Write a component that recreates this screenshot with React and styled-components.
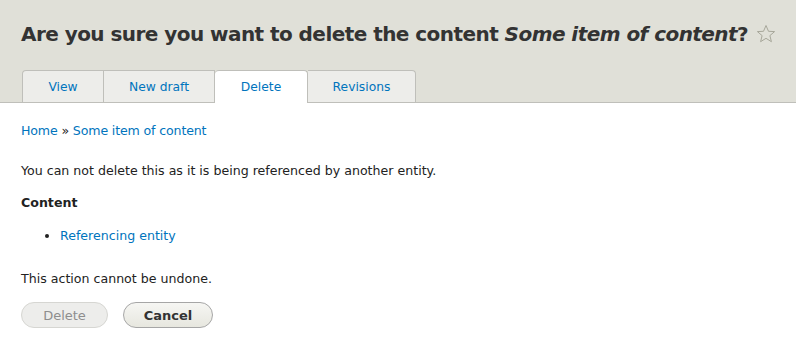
import styled, { createGlobalStyle } from "styled-components";

const GlobalStyle = createGlobalStyle`
  html, body {
    margin: 0;
    padding: 0;
    background: #fff;
  }
  body {
    font-family: "DejaVu Sans", "Lucida Grande", Verdana, sans-serif;
    font-size: 12.6px;
    color: #222;
  }
`;

const Header = styled.header`
  background: #e0e0d8;
  padding: 20px 21px 0;
  border-bottom: 1px solid #bfbfba;
`;

const Title = styled.h1`
  margin: 0;
  display: flex;
  align-items: center;
  white-space: nowrap;
  font-size: 20px;
  letter-spacing: -0.55px;
  line-height: 28px;
  font-weight: bold;
  color: #333;
  em {
    font-style: italic;
  }
`;

const Star = styled.svg`
  margin-left: 8px;
  width: 20px;
  height: 20px;
  flex: none;
`;

const Tabs = styled.ul`
  list-style: none;
  margin: 22px 0 0 1px;
  padding: 0;
  display: flex;
`;

const Tab = styled.li`
  box-sizing: border-box;
  width: ${(p) => p.$w}px;
  height: ${(p) => (p.$active ? 33 : 32)}px;
  display: flex;
  align-items: center;
  justify-content: center;
  background: ${(p) => (p.$active ? "#fff" : "#ededea")};
  border: 1px solid #bfbfba;
  border-bottom: none;
  border-left-width: ${(p) => (p.$first ? 1 : 0)}px;
  border-radius: ${(p) =>
    p.$first ? "4px 0 0 0" : p.$last ? "0 4px 0 0" : p.$active ? "4px 4px 0 0" : "0"};
  margin-bottom: ${(p) => (p.$active ? "-1px" : "0")};
  padding-bottom: ${(p) => (p.$active ? 1 : 0)}px;
  a {
    color: #0074bd;
    text-decoration: none;
    font-size: 12.3px;
  }
`;

const Main = styled.main`
  padding: 19px 21px 0;
`;

const Breadcrumb = styled.nav`
  line-height: 18px;
  letter-spacing: -0.15px;
  a {
    color: #0074bd;
    text-decoration: none;
  }
`;

const Text = styled.p`
  margin: ${(p) => p.$mt}px 0 0;
  line-height: 18px;
  font-weight: ${(p) => (p.$bold ? "bold" : "normal")};
`;

const List = styled.ul`
  margin: 15px 0 0;
  padding-left: 39px;
  line-height: 18px;
  a {
    color: #0074bd;
    text-decoration: none;
  }
`;

const Actions = styled.div`
  margin-top: 14px;
  display: flex;
  gap: 15px;
`;

const Button = styled.button`
  height: 26px;
  box-sizing: border-box;
  width: ${(p) => p.$w}px;
  border-radius: 13px;
  font-family: inherit;
  font-size: 13px;
  padding: 0;
  border: 1px solid ${(p) => (p.disabled ? "#d6d6d2" : "#a6a6a6")};
  background: ${(p) =>
    p.disabled ? "#ededeb" : "linear-gradient(#f6f6f3, #e7e7df)"};
  color: ${(p) => (p.disabled ? "#8e8e8e" : "#333")};
  font-weight: ${(p) => (p.disabled ? "normal" : "bold")};
`;

const tabs = [
  { label: "View", w: 82 },
  { label: "New draft", w: 111 },
  { label: "Delete", w: 93, active: true },
  { label: "Revisions", w: 108 },
];

export default function App() {
  return (
    <>
      <GlobalStyle />
      <Header>
        <Title>
          <span>
            Are you sure you want to delete the content <em>Some item of content</em>?
          </span>
          <Star viewBox="0 0 20 20">
            <polygon
              points="10,1.5 12.5,7.3 18.6,7.6 13.9,11.6 15.4,17.7 10,14.3 4.6,17.7 6.1,11.6 1.4,7.6 7.5,7.3"
              fill="none"
              stroke="#a7a79a"
              strokeWidth="1"
              strokeLinejoin="round"
            />
          </Star>
        </Title>
        <Tabs>
          {tabs.map((t, i) => (
            <Tab
              key={t.label}
              $w={t.w}
              $active={t.active}
              $first={i === 0}
              $last={i === tabs.length - 1}
            >
              <a href="#">{t.label}</a>
            </Tab>
          ))}
        </Tabs>
      </Header>
      <Main>
        <Breadcrumb>
          <a href="#">Home</a> » <a href="#">Some item of content</a>
        </Breadcrumb>
        <Text $mt={22}>
          You can not delete this as it is being referenced by another entity.
        </Text>
        <Text $mt={14} $bold>
          Content
        </Text>
        <List>
          <li>
            <a href="#">Referencing entity</a>
          </li>
        </List>
        <Text $mt={25}>This action cannot be undone.</Text>
        <Actions>
          <Button $w={87} disabled>
            Delete
          </Button>
          <Button $w={90}>Cancel</Button>
        </Actions>
      </Main>
    </>
  );
}
